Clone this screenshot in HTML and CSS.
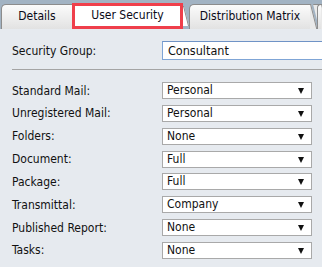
FILE: index.html
```html
<!DOCTYPE html>
<html lang="en">
<head>
  <meta charset="UTF-8">
  <title>User Security</title>
  <link rel="stylesheet" href="styles.css">
</head>
<body>
  <div class="tabs">
    <div class="tab tab-details">Details</div>
    <div class="tab tab-security active">User Security</div>
    <div class="tab tab-matrix">Distribution Matrix</div>
    <div class="tab tab-more"></div>
  </div>

  <div class="panel">
    <div class="field group-field">
      <label>Security Group:</label>
      <div class="text-input">Consultant</div>
    </div>

    <hr class="divider">

    <div class="rights">
      <div class="field"><label>Standard Mail:</label><div class="select">Personal</div></div>
      <div class="field"><label>Unregistered Mail:</label><div class="select">Personal</div></div>
      <div class="field"><label>Folders:</label><div class="select">None</div></div>
      <div class="field"><label>Document:</label><div class="select">Full</div></div>
      <div class="field"><label>Package:</label><div class="select">Full</div></div>
      <div class="field"><label>Transmittal:</label><div class="select">Company</div></div>
      <div class="field"><label>Published Report:</label><div class="select">None</div></div>
      <div class="field"><label>Tasks:</label><div class="select">None</div></div>
    </div>
  </div>
</body>
</html>
```

FILE: styles.css
```css
html, body {
  overflow: hidden;
}

body {
  font-family: "DejaVu Sans Condensed", "DejaVu Sans", sans-serif;
  font-size: 12px;
  margin: 0;
  background-color: #e6eaef;
  color: #111;
}

/* Tab strip */
.tabs {
  display: flex;
  position: relative;
  isolation: isolate;
  overflow: hidden;
  height: 29px;
  padding-top: 4px;
  padding-left: 1px;
  box-sizing: border-box;
  background-color: #a2b3c3;
}

.tab {
  position: relative;
  flex: none;
  height: 25px;
  box-sizing: border-box;
  line-height: 23px;
  text-align: center;
  color: #0a0a18;
  background: linear-gradient(#fbfbfb, #e2e2e2);
  border: 1px solid #8c8c8c;
  border-right: none;
  border-bottom: none;
  border-radius: 5px 0 0 0;
}

/* slanted right edge */
.tab::after {
  content: '';
  position: absolute;
  z-index: -1;
  top: -1px;
  bottom: 0;
  right: -1px;
  width: 8px;
  background: #e9e9e9;
  border-top: 1px solid #8c8c8c;
  border-right: 1px solid #8c8c8c;
  transform: skewX(14deg);
  transform-origin: top left;
}

.tab-details {
  width: 71px;
}

.tab-security {
  width: 111px;
}

.tab-matrix {
  width: 121px;
  margin-left: 6px;
}

.tab-more {
  width: 4px;
  margin-left: 7px;
}

.tab.active {
  background: #fff;
  border: 3px solid #ef3f4b;
  line-height: 19px;
  margin-top: -1px;
  height: 26px;
  border-radius: 0;
}

.tab.active::after {
  background: #fff;
  top: 0;
  right: -4px;
}

/* Form */
.panel {
  padding: 12px 0 0 12px;
}

.field {
  display: flex;
  align-items: center;
}

.field label {
  width: 150px;
  flex: none;
}

.text-input {
  flex: none;
  width: 160px;
  height: 19px;
  box-sizing: border-box;
  padding-left: 5px;
  line-height: 17px;
  font-size: 12.5px;
  background: #fff;
  border: 1px solid #7fa5d6;
  border-top-color: #6f93c6;
  border-right: none;
}

.divider {
  border: none;
  border-top: 1px solid #a4a4a4;
  margin: 9px 0 0 0;
}

.rights {
  display: flex;
  flex-direction: column;
  gap: 5.85px;
  padding-top: 12px;
}

.select {
  position: relative;
  width: 150px;
  height: 17px;
  box-sizing: border-box;
  padding-left: 4px;
  line-height: 15px;
  background: #fff;
  border: 1px solid #a9a9a9;
}

.select::after {
  content: '';
  position: absolute;
  right: 7px;
  top: 5px;
  border-left: 3px solid transparent;
  border-right: 3px solid transparent;
  border-top: 6px solid #111;
}
```
